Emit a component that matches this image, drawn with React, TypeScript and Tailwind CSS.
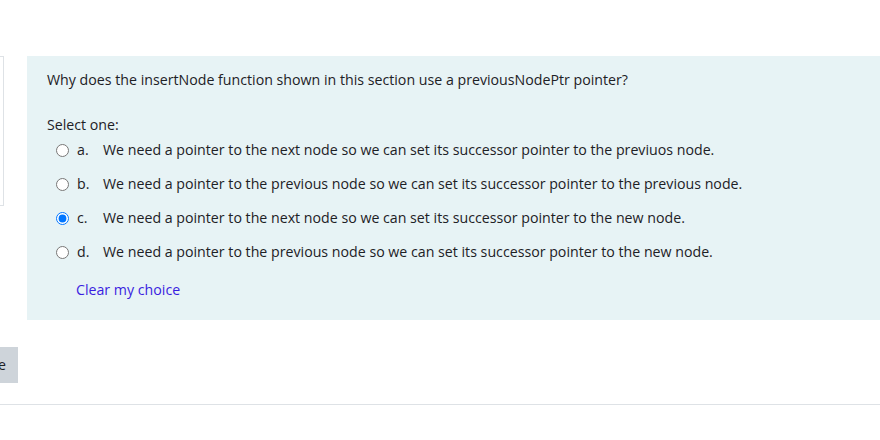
import React from "react";

const options = [
  { letter: "a.", text: "We need a pointer to the next node so we can set its successor pointer to the previuos node." },
  { letter: "b.", text: "We need a pointer to the previous node so we can set its successor pointer to the previous node." },
  { letter: "c.", text: "We need a pointer to the next node so we can set its successor pointer to the new node.", checked: true },
  { letter: "d.", text: "We need a pointer to the previous node so we can set its successor pointer to the new node." },
];

const App = () => (
  <div
    className="relative h-[440px] w-[880px] overflow-hidden bg-white text-[14.2px] text-[#1d2125]"
    style={{ fontFamily: '"Open Sans", "Noto Sans", sans-serif' }}
  >
    <div className="flex items-start pt-[56px]">
      <div className="-ml-[200px] h-[150px] w-[204px] shrink-0 border border-[#dee2e6]" />
      <div className="ml-[23px] h-[264px] w-[900px] shrink-0 bg-[#e7f3f5] pl-[20px] pt-[13px]">
        <p className="h-[22px] leading-[22px]">
          Why does the insertNode function shown in this section use a previousNodePtr pointer?
        </p>
        <p className="mt-[23px] h-[22px] leading-[22px]">Select one:</p>
        <div className="-mt-[3px] flex flex-col">
          {options.map((o) => (
            <label key={o.letter} className="flex h-[34px] shrink-0 items-center pl-[9px] leading-[22px]">
              <input
                type="radio"
                name="answer"
                defaultChecked={o.checked}
                className="m-0 h-[13px] w-[13px] accent-[#0075ff]"
              />
              <span className="ml-[8px] w-[26px]">{o.letter}</span>
              <span>{o.text}</span>
            </label>
          ))}
        </div>
        <a href="#" className="mt-[10px] ml-[29px] inline-block leading-[22px] text-[#3a1de0]">
          Clear my choice
        </a>
      </div>
    </div>
    <div className="mt-[27px] flex h-[36px] w-[18px] items-center justify-end overflow-hidden bg-[#ced4da]">
      <span className="whitespace-nowrap pr-[12px]">Next page</span>
    </div>
    <div className="mt-[21px] border-t border-[#dee2e6]" />
  </div>
);

export default App;
